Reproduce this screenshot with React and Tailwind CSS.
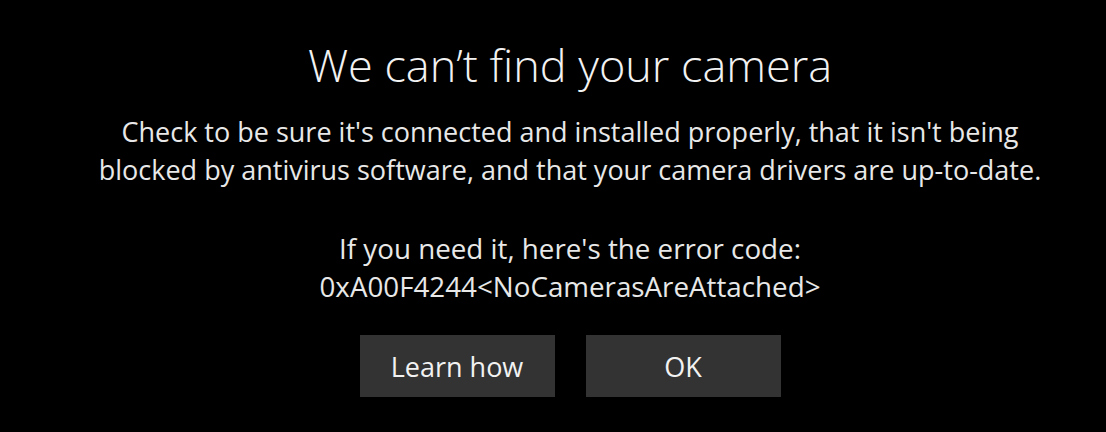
import React from "react";

const App = () => {
  return (
    <div
      className="w-[1106px] h-[432px] bg-black text-white flex flex-col items-center overflow-hidden pl-[34px]"
      style={{ fontFamily: '"Open Sans", "Noto Sans", sans-serif' }}
    >
      <h1 className="mt-[37px] text-[45px] leading-[56px] font-light text-[#f2f2f2] whitespace-nowrap">
        We can’t find your camera
      </h1>
      <p className="mt-[20px] text-[27px] leading-[38px] text-center text-[#e8e8e8] whitespace-nowrap">
        Check to be sure it's connected and installed properly, that it isn't being
        <br />
        blocked by antivirus software, and that your camera drivers are up-to-date.
      </p>
      <p className="mt-[40px] text-[27.75px] leading-[38px] text-center text-[#e8e8e8] whitespace-nowrap">
        If you need it, here's the error code:
        <br />
        0xA00F4244&lt;NoCamerasAreAttached&gt;
      </p>
      <div className="mt-[30px] flex gap-[31px]">
        <button
          type="button"
          className="w-[195px] h-[62px] pt-[3px] bg-[#333333] text-[27px] text-[#f2f2f2]"
        >
          Learn how
        </button>
        <button
          type="button"
          className="w-[195px] h-[62px] pt-[3px] bg-[#333333] text-[27px] text-[#f2f2f2]"
        >
          OK
        </button>
      </div>
    </div>
  );
};

export default App;
